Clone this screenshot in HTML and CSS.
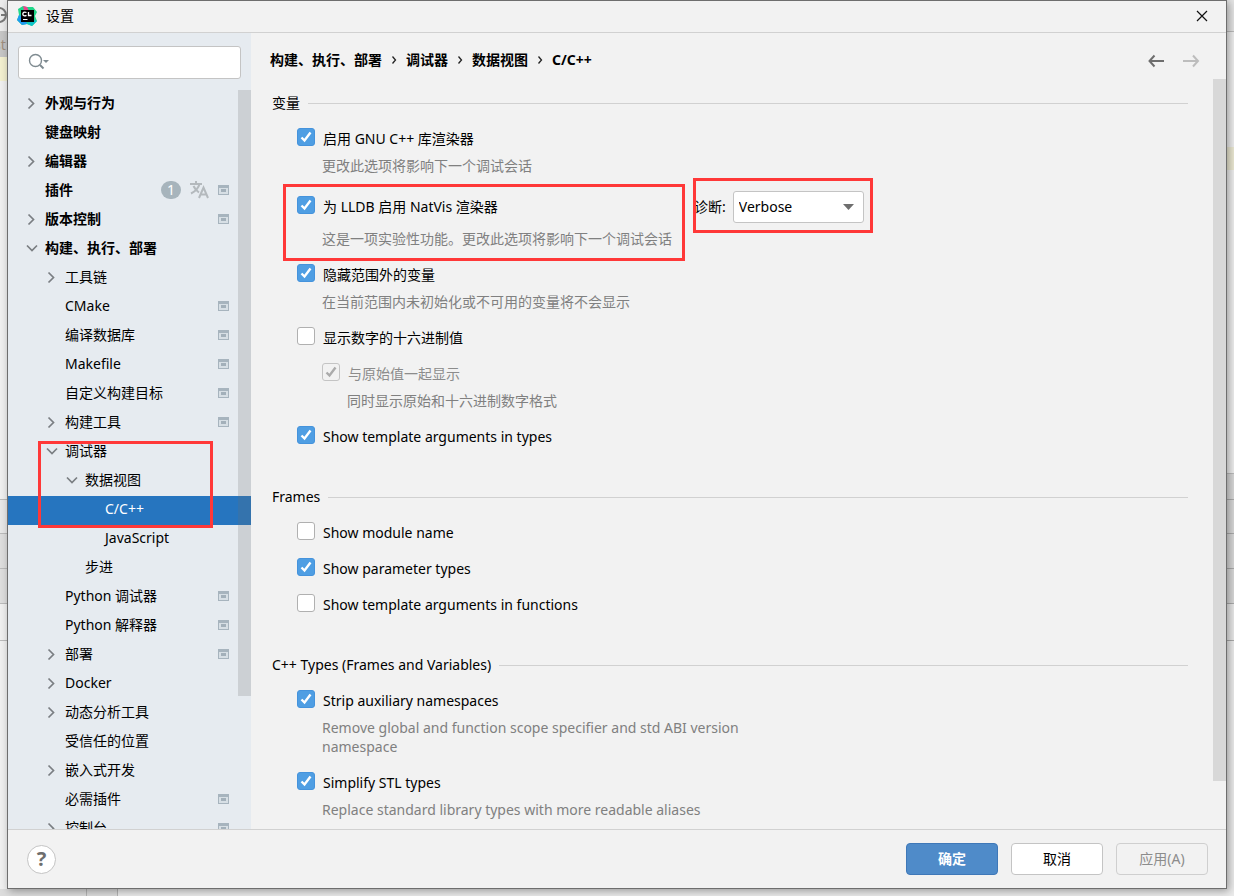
FILE: index.html
```html
<!DOCTYPE html>
<html lang="zh-CN">

<head>
    <meta charset="UTF-8">
    <meta name="viewport" content="width=device-width, initial-scale=1.0">
    <title>设置</title>
    <link rel="stylesheet" href="styles.css">
</head>

<body>
    <!-- Shared icons -->
    <svg class="sprite" aria-hidden="true">
        <symbol id="right" viewBox="0 0 16 16">
            <path d="M5.5 3.5L10.5 8.5L5.5 13.5" fill="none" stroke="#7a7e82" stroke-width="1.7" />
        </symbol>
        <symbol id="down" viewBox="0 0 16 16">
            <path d="M4 5.5L9 10.5L14 5.5" fill="none" stroke="#7a7e82" stroke-width="1.7" />
        </symbol>
        <symbol id="project" viewBox="0 0 11 10">
            <path d="M0 0H11V10H0Z" fill="#a7b4be" />
            <path d="M1 3H10V9H1Z" fill="#d7dfe5" />
            <path d="M3 4H8V7H3Z" fill="#a3b0ba" />
        </symbol>
        <symbol id="crumb" viewBox="0 0 6 10">
            <path d="M1.5 1.5L4.5 5L1.5 8.5" fill="none" stroke="#222" stroke-width="1.3" />
        </symbol>
    </svg>

    <!-- Editor window behind the dialog -->
    <div class="editor-left">
        <svg class="target" width="16" height="16" viewBox="0 0 16 16">
            <circle cx="8" cy="8" r="7" fill="none" stroke="#7a7a7a" stroke-width="2" />
            <path d="M8 1V6M8 10V15M10 8H15M1 8H6" stroke="#7a7a7a" stroke-width="2" />
        </svg>
        <span class="tab-text">st</span>
    </div>
    <div class="editor-right"></div>
    <div class="editor-bottom"></div>

    <div class="dialog">
        <header class="title-bar">
            <svg width="20" height="20" viewBox="0 0 20 20">
                <path d="M1 3L6 0L10 1L16 1L20 6L18 10L20 15L15 20L10 18L5 19L0 14L2 9Z" fill="#21d789" />
                <path d="M0 14L2 9L9 12L10 18L5 19Z" fill="#1d9bf0" />
                <path d="M6 0L10 1L12 5L7 4Z" fill="#f0408c" />
                <path d="M14 12L20 15L15 20L10 18Z" fill="#0fc4c9" />
                <rect x="4" y="4" width="13" height="12" />
                <path d="M9.500 6.500C7 5.500 5.800 6.500 5.800 8C5.800 9.700 7.500 10.300 9.500 9.300M11.500 6V9.500H14.500" fill="none" stroke="#fff" stroke-width="1.300" />
                <path d="M6 13.500H10.500" stroke="#fff" />
            </svg>
            <span class="title">设置</span>
            <button class="icon-btn close" aria-label="关闭">
                <svg width="12" height="12" viewBox="0 0 12 12">
                    <path d="M1 1L11 11M11 1L1 11" stroke="#111" stroke-width="1.2" />
                </svg>
            </button>
        </header>

        <div class="content">
            <aside class="sidebar">
                <div class="search">
                    <svg width="22" height="18" viewBox="0 0 22 18">
                        <circle cx="7.500" cy="7.500" r="6" fill="none" stroke="#7f8b91" stroke-width="1.400" />
                        <path d="M12 12L15.500 15.500" stroke="#7f8b91" stroke-width="2" />
                        <path d="M15 7H21L18 10Z" fill="#7f8b91" />
                    </svg>
                    <input type="text" aria-label="搜索设置">
                </div>
                <div class="tree-wrap">
                    <ul class="tree">
                        <li class="row top"><svg class="arrow"><use href="#right" /></svg><span>外观与行为</span></li>
                        <li class="row top"><i class="arrow"></i><span>键盘映射</span></li>
                        <li class="row top"><svg class="arrow"><use href="#right" /></svg><span>编辑器</span></li>
                        <li class="row top">
                            <i class="arrow"></i><span>插件</span>
                            <div class="marks">
                                <span class="count">1</span>
                                <svg width="19" height="18" viewBox="0 0 19 18" fill="none" stroke="#b4b9bd" stroke-width="2">
                                    <path d="M0 3H12M6 0V3M9.500 3C8.500 7 5 10.500 1 12.500M3.500 5C5 8.500 7 10 9 11.500" />
                                    <path d="M9 17L13.500 6.500L18 17M10.500 13.500H16.500" />
                                </svg>
                                <svg class="mark"><use href="#project" /></svg>
                            </div>
                        </li>
                        <li class="row top"><svg class="arrow"><use href="#right" /></svg><span>版本控制</span><svg class="mark"><use href="#project" /></svg></li>
                        <li class="row top"><svg class="arrow"><use href="#down" /></svg><span>构建、执行、部署</span></li>
                        <li class="row level2"><svg class="arrow"><use href="#right" /></svg><span>工具链</span></li>
                        <li class="row level2"><i class="arrow"></i><span>CMake</span><svg class="mark"><use href="#project" /></svg></li>
                        <li class="row level2"><i class="arrow"></i><span>编译数据库</span><svg class="mark"><use href="#project" /></svg></li>
                        <li class="row level2"><i class="arrow"></i><span>Makefile</span><svg class="mark"><use href="#project" /></svg></li>
                        <li class="row level2"><i class="arrow"></i><span>自定义构建目标</span><svg class="mark"><use href="#project" /></svg></li>
                        <li class="row level2"><svg class="arrow"><use href="#right" /></svg><span>构建工具</span><svg class="mark"><use href="#project" /></svg></li>
                        <li class="marked">
                            <ul>
                                <li class="row level2"><svg class="arrow"><use href="#down" /></svg><span>调试器</span></li>
                                <li class="row level3"><svg class="arrow"><use href="#down" /></svg><span>数据视图</span></li>
                                <li class="row level4 selected"><i class="arrow"></i><span>C/C++</span></li>
                            </ul>
                            <div class="red-box tree-box"></div>
                        </li>
                        <li class="row level4"><i class="arrow"></i><span>JavaScript</span></li>
                        <li class="row level3"><i class="arrow"></i><span>步进</span></li>
                        <li class="row level2"><i class="arrow"></i><span>Python 调试器</span><svg class="mark"><use href="#project" /></svg></li>
                        <li class="row level2"><i class="arrow"></i><span>Python 解释器</span><svg class="mark"><use href="#project" /></svg></li>
                        <li class="row level2"><svg class="arrow"><use href="#right" /></svg><span>部署</span><svg class="mark"><use href="#project" /></svg></li>
                        <li class="row level2"><svg class="arrow"><use href="#right" /></svg><span>Docker</span></li>
                        <li class="row level2"><svg class="arrow"><use href="#right" /></svg><span>动态分析工具</span></li>
                        <li class="row level2"><i class="arrow"></i><span>受信任的位置</span></li>
                        <li class="row level2"><svg class="arrow"><use href="#right" /></svg><span>嵌入式开发</span></li>
                        <li class="row level2"><i class="arrow"></i><span>必需插件</span><svg class="mark"><use href="#project" /></svg></li>
                        <li class="row level2"><svg class="arrow"><use href="#right" /></svg><span>控制台</span><svg class="mark"><use href="#project" /></svg></li>
                    </ul>
                    <div class="scrollbar tree-scroll"></div>
                </div>
            </aside>

            <main class="page">
                <div class="page-head">
                    <nav class="crumbs">
                        <span>构建、执行、部署</span>
                        <svg><use href="#crumb" /></svg>
                        <span>调试器</span>
                        <svg><use href="#crumb" /></svg>
                        <span>数据视图</span>
                        <svg><use href="#crumb" /></svg>
                        <span>C/C++</span>
                    </nav>
                    <div class="history">
                        <button class="icon-btn" aria-label="后退">
                            <svg width="18" height="14" viewBox="0 0 18 14" fill="none" stroke="#6e6e6e" stroke-width="2">
                                <path d="M16 7H1M6.500 1.500L1.500 7L6.500 12.500" />
                            </svg>
                        </button>
                        <button class="icon-btn" aria-label="前进" disabled>
                            <svg width="18" height="14" viewBox="0 0 18 14" fill="none" stroke="#bdbdbd" stroke-width="2">
                                <path d="M0 7H15M10 1.500L15 7L10 12.500" />
                            </svg>
                        </button>
                    </div>
                </div>

                <div class="page-body">
                    <section class="group">
                        <h2>变量</h2>
                        <div class="option">
                            <label><input type="checkbox" checked>启用 GNU C++ 库渲染器</label>
                            <p>更改此选项将影响下一个调试会话</p>
                        </div>
                        <div class="natvis">
                            <div class="option marked">
                                <label class="tall"><input type="checkbox" checked>为 LLDB 启用 NatVis 渲染器</label>
                                <p>这是一项实验性功能。更改此选项将影响下一个调试会话</p>
                                <div class="red-box natvis-box"></div>
                            </div>
                            <div class="diag marked">
                                <label for="diag">诊断:</label>
                                <select id="diag">
                                    <option>Verbose</option>
                                </select>
                                <div class="red-box diag-box"></div>
                            </div>
                        </div>
                        <div class="option">
                            <label><input type="checkbox" checked>隐藏范围外的变量</label>
                            <p>在当前范围内未初始化或不可用的变量将不会显示</p>
                        </div>
                        <div class="option">
                            <label><input type="checkbox">显示数字的十六进制值</label>
                        </div>
                        <div class="option sub">
                            <label><input type="checkbox" checked disabled>与原始值一起显示</label>
                            <p>同时显示原始和十六进制数字格式</p>
                        </div>
                        <div class="option">
                            <label><input type="checkbox" checked>Show template arguments in types</label>
                        </div>
                    </section>

                    <section class="group">
                        <h2>Frames</h2>
                        <div class="option">
                            <label><input type="checkbox">Show module name</label>
                        </div>
                        <div class="option">
                            <label><input type="checkbox" checked>Show parameter types</label>
                        </div>
                        <div class="option">
                            <label><input type="checkbox">Show template arguments in functions</label>
                        </div>
                    </section>

                    <section class="group">
                        <h2>C++ Types (Frames and Variables)</h2>
                        <div class="option">
                            <label><input type="checkbox" checked>Strip auxiliary namespaces</label>
                            <p>Remove global and function scope specifier and std ABI version namespace</p>
                        </div>
                        <div class="option">
                            <label><input type="checkbox" checked>Simplify STL types</label>
                            <p>Replace standard library types with more readable aliases</p>
                        </div>
                    </section>
                </div>
                <div class="scrollbar page-scroll"></div>
            </main>
        </div>

        <footer class="buttons">
            <button class="help" aria-label="帮助">?</button>
            <button class="btn primary">确定</button>
            <button class="btn">取消</button>
            <button class="btn" disabled>应用(A)</button>
        </footer>
    </div>
</body>

</html>
```

FILE: styles.css
```css
* {
    box-sizing: border-box;
}

body {
    margin: 0;
    height: 100vh;
    overflow: hidden;
    display: grid;
    grid-template-columns: 7px 1fr 7px;
    grid-template-rows: 1fr 7px;
    background-color: #e4e4e4;
    font-family: "Noto Sans", "Noto Sans CJK SC", sans-serif;
    font-size: 14px;
    line-height: 20px;
    color: #000;
}

ul {
    list-style: none;
    margin: 0;
    padding: 0;
}

button,
input,
select {
    font: inherit;
}

.sprite {
    position: absolute;
    width: 0;
    height: 0;
}

/* Editor window behind the dialog */
.editor-left {
    grid-area: 1 / 1;
    overflow: hidden;
    background: linear-gradient(#ececec 31px, #c6c6c6 31px 57px, #f3f0d0 57px 81px, #f0f0f0 81px 499px,
        #bbb 499px 500px, #e8e8e8 500px 533px, #bbb 533px 534px, #dedede 534px 568px,
        #bbb 568px 569px, #dedede 569px 603px, #bbb 603px 604px, #f0f0f0 604px 640px, #bbb 640px 641px, #f0f0f0 641px);
}

.target {
    display: block;
    margin: 7px 0 12px -9px;
}

.tab-text {
    display: block;
    margin-left: -6px;
    color: #a08f80;
}

.editor-right {
    grid-area: 1 / 3;
    background: linear-gradient(#e4e4e4 31px, #bbb 31px 32px, #eee 32px 147px, #ebe8d2 147px 170px, #eee 170px 473px,
        #bbb 473px 474px, #d8d8d8 474px 499px, #aaa 499px 500px, #d8d8d8 500px 533px, #aaa 533px 534px,
        #d8d8d8 534px 568px, #aaa 568px 569px, #d8d8d8 569px 603px, #aaa 603px 604px, #e8e8e8 604px 640px,
        #aaa 640px 641px, #ebebeb 641px);
}

.editor-bottom {
    grid-area: 2 / 1 / 3 / 4;
    background: linear-gradient(to right, #dcdcdc 86px, #b5b5b5 86px 87px, #dcdcdc 87px 117px, #b5b5b5 117px 118px, #ebebeb 118px);
}

/* Dialog */
.dialog {
    grid-area: 1 / 2;
    min-height: 0;
    min-width: 0;
    z-index: 1;
    display: flex;
    flex-direction: column;
    background-color: #f2f2f2;
    border: 1px solid #6e6e6e;
    box-shadow: 2px 2px 8px rgba(0, 0, 0, 0.35);
}

.title-bar {
    height: 32px;
    flex: none;
    display: flex;
    align-items: center;
    gap: 9px;
    padding: 0 18px 2px 9px;
    border-bottom: 1px solid #d1d1d1;
}

.icon-btn {
    display: flex;
    padding: 0;
    border: none;
    background: none;
}

.close {
    margin-left: auto;
}

.content {
    flex: 1;
    min-height: 0;
    display: flex;
}

/* Sidebar */
.sidebar {
    width: 243px;
    flex: none;
    display: flex;
    flex-direction: column;
    background-color: #e6ebf0;
}

.search {
    height: 33px;
    flex: none;
    margin: 13px 10px 11px;
    padding: 0 9px 2px;
    display: flex;
    align-items: center;
    gap: 4px;
    background-color: #fff;
    border: 1px solid #c4c4c4;
    border-radius: 3px;
}

.search input {
    flex: 1;
    min-width: 0;
    border: none;
    outline: none;
    background: none;
}

.tree-wrap {
    position: relative;
    flex: 1;
    min-height: 0;
    overflow: hidden;
}

.row {
    height: 29px;
    display: flex;
    align-items: center;
    padding: 0 22px 3px 15px;
    white-space: nowrap;
}

.row.level2 {
    padding-left: 35px;
}

.row.level3 {
    padding-left: 55px;
}

.row.level4 {
    padding-left: 75px;
}

.top {
    font-weight: bold;
}

.selected {
    background-color: #2675bf;
    color: #fff;
}

.arrow {
    width: 16px;
    height: 16px;
    flex: none;
    margin-right: 6px;
}

.mark {
    width: 11px;
    height: 10px;
    margin-left: auto;
}

.marks {
    margin-left: auto;
    display: flex;
    align-items: center;
    gap: 9px;
}

.count {
    width: 20px;
    height: 18px;
    border-radius: 9px;
    background-color: #a7b4bc;
    color: #fff;
    font-weight: normal;
    line-height: 18px;
    text-align: center;
}

.scrollbar {
    position: absolute;
    right: 0;
    width: 13px;
    background-color: rgba(110, 110, 110, 0.21);
}

.tree-scroll {
    top: 0;
    height: 82%;
}

/* Settings page */
.page {
    position: relative;
    flex: 1;
    min-width: 0;
    display: flex;
    flex-direction: column;
}

.page-head {
    height: 46px;
    flex: none;
    display: flex;
    justify-content: space-between;
    align-items: center;
    padding: 10px 25px 0 19px;
}

.crumbs {
    display: flex;
    align-items: center;
    gap: 9px;
    padding-bottom: 2px;
    font-weight: bold;
}

.crumbs svg {
    width: 6px;
    height: 10px;
}

.history {
    display: flex;
    gap: 17px;
}

.page-body {
    flex: 1;
    min-height: 0;
    overflow: hidden;
    display: flex;
    flex-direction: column;
    gap: 40px;
    padding: 14px 38px 0 21px;
}

.page-scroll {
    top: 46px;
    height: 702px;
    background-color: #d8d8d8;
}

.group {
    display: flex;
    flex-direction: column;
    gap: 16px;
}

.group h2 {
    display: flex;
    align-items: center;
    gap: 8px;
    margin: 0;
    font-size: 14px;
    font-weight: normal;
}

.group h2::after {
    content: "";
    flex: 1;
    height: 1px;
    background-color: #d1d1d1;
}

.option {
    padding-left: 25px;
}

.option.sub {
    padding-left: 50px;
}

.option label {
    display: flex;
    align-items: center;
    height: 20px;
    gap: 8px;
}

.option label.tall {
    height: 30px;
}

.option p {
    max-width: 480px;
    margin: 7px 0 0;
    padding: 0 0 1px 25px;
    line-height: 19px;
    color: #808080;
}

.option input {
    appearance: none;
    width: 18px;
    height: 18px;
    flex: none;
    margin: 0 0 4px;
    background-color: #fff;
    border: 1px solid #b0b0b0;
    border-radius: 3px;
}

.option input:checked {
    border-color: #4593dc;
    background: #4f9ee3 url("data:image/svg+xml,%3Csvg xmlns='http://www.w3.org/2000/svg' viewBox='0 0 16 16'%3E%3Cpath d='M3.5 8.500L6.500 11.500L12.500 3.500' fill='none' stroke='white' stroke-width='2.400'/%3E%3C/svg%3E");
}

.option input:disabled {
    border-color: #c4c4c4;
    background: #f2f2f2 url("data:image/svg+xml,%3Csvg xmlns='http://www.w3.org/2000/svg' viewBox='0 0 16 16'%3E%3Cpath d='M3.5 8.500L6.500 11.500L12.500 3.500' fill='none' stroke='%23ababab' stroke-width='2.400'/%3E%3C/svg%3E");
}

.option label:has(input:disabled) {
    color: #8c8c8c;
}

.natvis {
    display: flex;
    gap: 22px;
}

.diag {
    height: 30px;
    display: flex;
    align-items: center;
    gap: 7px;
}

.diag select {
    appearance: none;
    width: 131px;
    height: 32px;
    padding: 0 5px;
    border: 1px solid #c4c4c4;
    border-radius: 3px;
    color: #000;
    background: #fff url("data:image/svg+xml,%3Csvg xmlns='http://www.w3.org/2000/svg' width='11' height='6'%3E%3Cpath d='M0 0H11L5.500 6Z' fill='%236e6e6e'/%3E%3C/svg%3E") no-repeat right 9px center;
}

/* Red highlight frames */
.marked {
    position: relative;
}

.red-box {
    position: absolute;
    border: 3px solid #ff3838;
    pointer-events: none;
}

.tree-box {
    top: 3px;
    bottom: -3px;
    left: 30px;
    width: 175px;
}

.natvis-box {
    top: -8px;
    bottom: -12px;
    left: 11px;
    right: -13px;
}

.diag-box {
    top: -14px;
    bottom: -11px;
    left: -1px;
    right: -9px;
}

/* Footer */
.buttons {
    height: 59px;
    flex: none;
    display: flex;
    align-items: center;
    gap: 13px;
    padding: 0 18px 0 19px;
    border-top: 1px solid #d1d1d1;
}

.btn {
    width: 92px;
    height: 32px;
    padding: 0;
    border: 1px solid #c4c4c4;
    border-radius: 4px;
    background-color: #fff;
    color: #000;
}

.btn.primary {
    background-color: #4f8bc9;
    border-color: #3f78b8;
    color: #fff;
    font-weight: bold;
}

.btn:disabled {
    background-color: #f2f2f2;
    border-color: #cfcfcf;
    color: #8c8c8c;
}

.help {
    width: 29px;
    height: 29px;
    margin-right: auto;
    padding: 0;
    border: 1px solid #c4c4c4;
    border-radius: 50%;
    background-color: #fff;
    color: #6e6e6e;
    font-size: 20px;
    font-weight: bold;
}
```
